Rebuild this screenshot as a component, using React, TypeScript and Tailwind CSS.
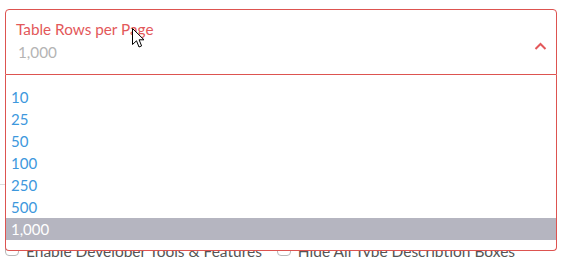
import React from "react";

const options = ["10", "25", "50", "100", "250", "500", "1,000"];

export default function App() {
  return (
    <div
      className="relative w-[574px] h-[257px] overflow-hidden bg-white"
      style={{ fontFamily: "Lato, 'Open Sans', sans-serif" }}
    >
      <div className="absolute left-0 top-[184px] w-[6px] border-t border-[#dcdcdc]" />
      <div className="relative mx-[5px] mt-[9px] w-[552px]">
        <div className="flex h-[66px] items-start justify-between rounded-t-[4px] border border-[#dd5350] pl-[10px] pr-[9px] pt-[10px]">
          <div className="flex flex-col">
            <span className="text-[15.3px] leading-[18px] text-[#e3585a]">Table Rows per Page</span>
            <span className="pl-[2px] pt-[4.5px] text-[15.3px] leading-[18px] text-[#b4b4b4]">1,000</span>
          </div>
          <svg width="13" height="8" viewBox="0 0 13 8" className="self-center mt-[-3px]">
            <path d="M1.5 7 L6.5 2 L11.5 7" fill="none" stroke="#e3585a" strokeWidth="2" />
          </svg>
        </div>
        <div className="absolute left-0 right-0 top-full z-10 rounded-b-[4px] border-x border-b border-[#dd5350] bg-white pt-[11px] pb-[10px]">
          {options.map((o) => (
            <div
              key={o}
              className={
                o === "1,000"
                  ? "h-[22px] bg-[#b5b5c0] pl-[5px] text-[15px] leading-[22px] text-white"
                  : "h-[22px] pl-[5px] text-[15px] leading-[22px] text-[#3d98dd]"
              }
            >
              {o}
            </div>
          ))}
        </div>
        <svg
          className="absolute left-[127px] top-[19px] z-20"
          width="13"
          height="21"
          viewBox="0 0 13 21"
        >
          <path
            d="M0.5 0.5 L0.5 16.5 L4.5 12.8 L7 19 L9.6 17.9 L7.1 11.8 L12 11.8 Z"
            fill="white"
            stroke="black"
            strokeWidth="1"
            strokeLinejoin="round"
          />
        </svg>
      </div>
      <div className="mt-[166px] flex items-center gap-[15px] pl-[5px] text-[15.5px] leading-[20px] text-[#555]">
        <label className="flex items-center gap-[7px]">
          <span className="mt-[-4px] h-[14px] w-[14px] rounded-[4px] border border-[#b8b8b8] bg-white" />
          <span>Enable Developer Tools &amp; Features</span>
        </label>
        <label className="flex items-center gap-[7px]">
          <span className="mt-[-4px] h-[14px] w-[14px] rounded-[4px] border border-[#b8b8b8] bg-white" />
          <span>Hide All Type Description Boxes</span>
        </label>
      </div>
    </div>
  );
}
